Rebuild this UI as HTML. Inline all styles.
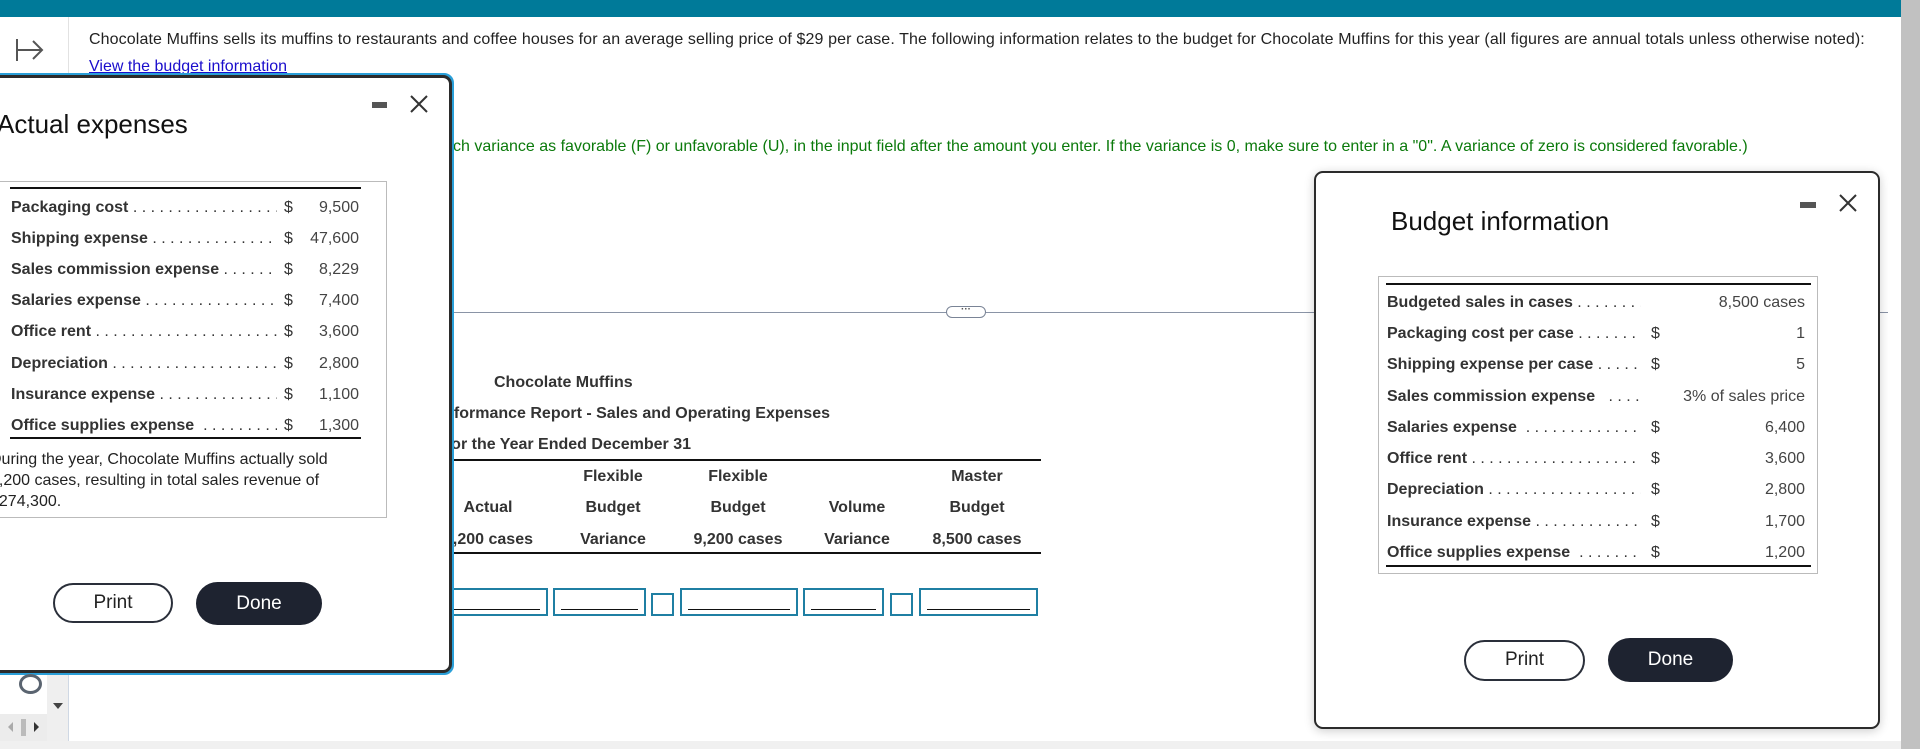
<!DOCTYPE html>
<html><head><meta charset="utf-8"><style>
*{margin:0;padding:0;box-sizing:border-box}
body{width:1920px;height:749px;overflow:hidden;background:#fff;font-family:"Liberation Sans",Arial,sans-serif;color:#222;position:relative}
.abs{position:absolute;white-space:nowrap}
.b{font-weight:bold;color:#333}
.hdr{font-size:16px;font-weight:bold;color:#333;text-align:center;width:140px}
.inp{position:absolute;border:2px solid #1f7fa3;height:28px;top:588px}
.inp i{position:absolute;left:6px;right:6px;bottom:4px;border-bottom:1.5px solid #111}
.sm{position:absolute;border:2px solid #1f7fa3;height:23px;top:593px;width:23px}
.row{position:absolute;font-size:16px;white-space:nowrap}
.row .l{position:absolute;left:0;font-weight:bold;color:#333;overflow:hidden}
.row .l b{font-weight:normal}
.row .d{position:absolute;color:#333}
.row .v{position:absolute;text-align:right;color:#444}
.lm .l{width:266px}
.rm .l{width:254px}
.btnp{position:absolute;border:2.5px solid #2a2f3a;border-radius:22px;background:#fff;font-size:19px;color:#222;text-align:center}
.btnd{position:absolute;border-radius:22px;background:#1e2330;font-size:19px;color:#fff;text-align:center}
.clip{position:absolute;left:453px;overflow:hidden;height:20px}
.clip span{position:absolute;right:0;top:0;white-space:nowrap;font-size:16px;font-weight:bold;color:#333}
</style></head><body>
<div class="abs" style="left:0;top:0;width:1901px;height:17px;background:#007a99"></div>
<div class="abs" style="left:1901px;top:0;width:19px;height:749px;background:#c1c1c1"></div>
<div class="abs" style="left:68px;top:17px;width:1px;height:700px;background:#e2e2e2"></div>
<svg class="abs" style="left:14px;top:36px" width="32" height="28" viewBox="0 0 32 28"><path d="M3 3V25M3 14H28M19 5L28 14L19 23" stroke="#555" stroke-width="2" fill="none"/></svg>
<div class="abs" style="left:89px;top:31px;font-size:16px;letter-spacing:0.11px;color:#222">Chocolate Muffins sells its muffins to restaurants and coffee houses for an average selling price of $29 per case. The following information relates to the budget for Chocolate Muffins for this year (all figures are annual totals unless otherwise noted):</div>
<div class="abs" style="left:89px;top:58px;font-size:16px;color:#1a0dcc;text-decoration:underline">View the budget information</div>
<div class="abs" style="left:453px;top:138px;font-size:16px;color:#0b7a0b">ch variance as favorable (F) or unfavorable (U), in the input field after the amount you enter. If the variance is 0, make sure to enter in a "0". A variance of zero is considered favorable.)</div>
<div class="abs" style="left:453px;top:312px;width:1435px;height:1px;background:#8a94a6"></div>
<div class="abs" style="left:946px;top:306px;width:40px;height:12px;border:1.5px solid #7a8496;border-radius:7px;background:#fff;font-size:10px;line-height:6px;text-align:center;color:#555;font-weight:bold">···</div>
<div class="abs b" style="left:494px;top:374px;font-size:16px">Chocolate Muffins</div>
<div class="clip" style="top:405px;width:377px"><span>Performance Report - Sales and Operating Expenses</span></div>
<div class="clip" style="top:436px;width:238px"><span>For the Year Ended December 31</span></div>
<div class="abs" style="left:453px;top:459px;width:588px;height:2px;background:#111"></div>
<div class="abs" style="left:453px;top:552px;width:588px;height:2px;background:#111"></div>
<div class="abs hdr" style="left:543px;top:468px">Flexible</div>
<div class="abs hdr" style="left:668px;top:468px">Flexible</div>
<div class="abs hdr" style="left:907px;top:468px">Master</div>
<div class="abs hdr" style="left:418px;top:499px">Actual</div>
<div class="abs hdr" style="left:543px;top:499px">Budget</div>
<div class="abs hdr" style="left:668px;top:499px">Budget</div>
<div class="abs hdr" style="left:787px;top:499px">Volume</div>
<div class="abs hdr" style="left:907px;top:499px">Budget</div>
<div class="clip" style="top:531px;width:80px"><span>9,200 cases</span></div>
<div class="abs hdr" style="left:543px;top:531px">Variance</div>
<div class="abs hdr" style="left:668px;top:531px">9,200 cases</div>
<div class="abs hdr" style="left:787px;top:531px">Variance</div>
<div class="abs hdr" style="left:907px;top:531px">8,500 cases</div>
<div class="inp" style="left:440px;width:108px"><i></i></div>
<div class="inp" style="left:553px;width:93px"><i></i></div>
<div class="sm" style="left:651px"></div>
<div class="inp" style="left:680px;width:118px"><i></i></div>
<div class="inp" style="left:803px;width:81px"><i></i></div>
<div class="sm" style="left:890px"></div>
<div class="inp" style="left:919px;width:119px"><i></i></div>

<!-- left modal -->
<div class="abs" style="left:-12px;top:73px;width:466px;height:602px;border:3px solid #2a9fd8;border-radius:10px"></div>
<div class="abs" style="left:-10px;top:75px;width:462px;height:598px;background:#fff;border:3px solid #2b2b2b;border-radius:9px;overflow:hidden"></div>
<div class="abs" style="left:-3px;top:109px;font-size:26px;color:#111">Actual expenses</div>
<div class="abs" style="left:372px;top:102px;width:15px;height:6px;background:#555"></div>
<svg class="abs" style="left:409px;top:94px" width="20" height="20"><path d="M2 2L18 18M18 2L2 18" stroke="#333" stroke-width="2"/></svg>
<div class="abs" style="left:0;top:181px;width:387px;height:337px;border:1.5px solid #bbb;border-left:none"></div>
<div class="abs" style="left:10px;top:187px;width:351px;height:2px;background:#111"></div>
<div class="abs" style="left:10px;top:437px;width:351px;height:2px;background:#111"></div>
<div class="lm">
<div class="row" style="left:11px;top:199px"><span class="l">Packaging cost<b> . . . . . . . . . . . . . . . . . . . . . . . . . . . .</b></span><span class="d" style="left:273px">$</span><span class="v" style="left:288px;width:60px">9,500</span></div>
<div class="row" style="left:11px;top:230px"><span class="l">Shipping expense<b> . . . . . . . . . . . . . . . . . . . . . . . . . . . .</b></span><span class="d" style="left:273px">$</span><span class="v" style="left:288px;width:60px">47,600</span></div>
<div class="row" style="left:11px;top:261px"><span class="l">Sales commission expense<b> . . . . . . . . . . . . . . . . . . .</b></span><span class="d" style="left:273px">$</span><span class="v" style="left:288px;width:60px">8,229</span></div>
<div class="row" style="left:11px;top:292px"><span class="l">Salaries expense<b> . . . . . . . . . . . . . . . . . . . . . . . . . . . .</b></span><span class="d" style="left:273px">$</span><span class="v" style="left:288px;width:60px">7,400</span></div>
<div class="row" style="left:11px;top:323px"><span class="l">Office rent<b> . . . . . . . . . . . . . . . . . . . . . . . . . . . . . . . .</b></span><span class="d" style="left:273px">$</span><span class="v" style="left:288px;width:60px">3,600</span></div>
<div class="row" style="left:11px;top:355px"><span class="l">Depreciation<b> . . . . . . . . . . . . . . . . . . . . . . . . . . . . . .</b></span><span class="d" style="left:273px">$</span><span class="v" style="left:288px;width:60px">2,800</span></div>
<div class="row" style="left:11px;top:386px"><span class="l">Insurance expense<b> . . . . . . . . . . . . . . . . . . . . . . . . . .</b></span><span class="d" style="left:273px">$</span><span class="v" style="left:288px;width:60px">1,100</span></div>
<div class="row" style="left:11px;top:417px"><span class="l">Office supplies expense<b> &nbsp;. . . . . . . . . . . . . . . . . . . .</b></span><span class="d" style="left:273px">$</span><span class="v" style="left:288px;width:60px">1,300</span></div>
</div>
<div class="abs" style="left:-10px;top:449px;font-size:16px;line-height:21px;color:#222">During the year, Chocolate Muffins actually sold<br>9,200 cases, resulting in total sales revenue of<br>$274,300.</div>
<div class="btnp" style="left:53px;top:583px;width:120px;height:40px;line-height:35px">Print</div>
<div class="btnd" style="left:196px;top:582px;width:126px;height:43px;line-height:43px">Done</div>

<!-- bottom-left -->
<div class="abs" style="left:0;top:714px;width:68px;height:27px;background:#ececec"></div>
<div class="abs" style="left:47px;top:675px;width:21px;height:66px;background:#efefef"></div>
<div class="abs" style="left:19px;top:674px;width:23px;height:20px;border:3px solid #5a6470;border-radius:50%"></div>
<div class="abs" style="left:53px;top:703px;width:0;height:0;border-left:5px solid transparent;border-right:5px solid transparent;border-top:6px solid #444"></div>
<div class="abs" style="left:8px;top:722px;width:0;height:0;border-top:5px solid transparent;border-bottom:5px solid transparent;border-right:5px solid #aaa"></div>
<div class="abs" style="left:21px;top:719px;width:5px;height:17px;background:#bbb"></div>
<div class="abs" style="left:34px;top:722px;width:0;height:0;border-top:5px solid transparent;border-bottom:5px solid transparent;border-left:5px solid #333"></div>
<div class="abs" style="left:68px;top:675px;width:1px;height:66px;background:#cfd8e4"></div>
<div class="abs" style="left:0;top:741px;width:1901px;height:8px;background:#f0f0f0"></div>

<!-- right modal -->
<div class="abs" style="left:1314px;top:171px;width:566px;height:558px;background:#fff;border:2px solid #2b2b2b;border-radius:9px;box-shadow:0 2px 10px rgba(0,0,0,.2)"></div>
<div class="abs" style="left:1391px;top:206px;font-size:26px;color:#111">Budget information</div>
<div class="abs" style="left:1800px;top:202px;width:16px;height:6px;background:#555"></div>
<svg class="abs" style="left:1838px;top:193px" width="20" height="20"><path d="M2 2L18 18M18 2L2 18" stroke="#333" stroke-width="2"/></svg>
<div class="abs" style="left:1378px;top:276px;width:440px;height:298px;border:1.5px solid #bbb"></div>
<div class="abs" style="left:1386px;top:283px;width:425px;height:2px;background:#111"></div>
<div class="abs" style="left:1386px;top:565px;width:425px;height:2px;background:#111"></div>
<div class="rm">
<div class="row" style="left:1387px;top:294px"><span class="l">Budgeted sales in cases<b> . . . . . . . . . . . . . . .</b></span><span class="v" style="left:290px;width:128px">8,500 cases</span></div>
<div class="row" style="left:1387px;top:325px"><span class="l">Packaging cost per case<b> . . . . . . . . . . . . . . .</b></span><span class="d" style="left:264px">$</span><span class="v" style="left:300px;width:118px">1</span></div>
<div class="row" style="left:1387px;top:356px"><span class="l">Shipping expense per case<b> . . . . . . . . . . . . .</b></span><span class="d" style="left:264px">$</span><span class="v" style="left:300px;width:118px">5</span></div>
<div class="row" style="left:1387px;top:388px"><span class="l">Sales commission expense<b> &nbsp;&nbsp;. . . . . . . . . . . .</b></span><span class="v" style="left:240px;width:178px">3% of sales price</span></div>
<div class="row" style="left:1387px;top:419px"><span class="l">Salaries expense<b> &nbsp;. . . . . . . . . . . . . . . . . . . . . .</b></span><span class="d" style="left:264px">$</span><span class="v" style="left:300px;width:118px">6,400</span></div>
<div class="row" style="left:1387px;top:450px"><span class="l">Office rent<b> . . . . . . . . . . . . . . . . . . . . . . . . . . . . .</b></span><span class="d" style="left:264px">$</span><span class="v" style="left:300px;width:118px">3,600</span></div>
<div class="row" style="left:1387px;top:481px"><span class="l">Depreciation<b> . . . . . . . . . . . . . . . . . . . . . . . . . . .</b></span><span class="d" style="left:264px">$</span><span class="v" style="left:300px;width:118px">2,800</span></div>
<div class="row" style="left:1387px;top:513px"><span class="l">Insurance expense<b> . . . . . . . . . . . . . . . . . . . . . .</b></span><span class="d" style="left:264px">$</span><span class="v" style="left:300px;width:118px">1,700</span></div>
<div class="row" style="left:1387px;top:544px"><span class="l">Office supplies expense<b> &nbsp;. . . . . . . . . . . . . . . . .</b></span><span class="d" style="left:264px">$</span><span class="v" style="left:300px;width:118px">1,200</span></div>
</div>
<div class="btnp" style="left:1464px;top:640px;width:121px;height:41px;line-height:36px">Print</div>
<div class="btnd" style="left:1608px;top:638px;width:125px;height:44px;line-height:44px">Done</div>
</body></html>
